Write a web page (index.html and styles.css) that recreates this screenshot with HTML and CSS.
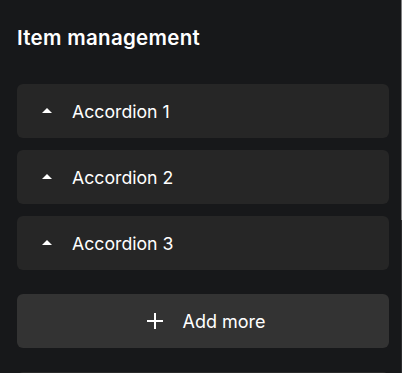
FILE: index.html
```html
<!DOCTYPE html>
<html lang="en">
<head>
<meta charset="UTF-8" />
<meta name="viewport" content="width=device-width, initial-scale=1" />
<title>Item management</title>
<link rel="stylesheet" href="styles.css">
</head>
<body>
  <div class="panel">
    <h2 class="panel-title">Item management</h2>

    <div class="accordion-list">
      <div class="accordion">
        <svg class="accordion-icon" viewBox="0 0 24 24" width="24" height="24"><path d="M7 14l5-5 5 5z" fill="currentColor"/></svg>
        <span>Accordion 1</span>
      </div>
      <div class="accordion">
        <svg class="accordion-icon" viewBox="0 0 24 24" width="24" height="24"><path d="M7 14l5-5 5 5z" fill="currentColor"/></svg>
        <span>Accordion 2</span>
      </div>
      <div class="accordion">
        <svg class="accordion-icon" viewBox="0 0 24 24" width="24" height="24"><path d="M7 14l5-5 5 5z" fill="currentColor"/></svg>
        <span>Accordion 3</span>
      </div>
    </div>

    <button class="add-more">
      <svg viewBox="0 0 18 18" width="18" height="18"><path d="M9 1v16M1 9h16" stroke="currentColor" stroke-width="2" fill="none"/></svg>
      <span>Add more</span>
    </button>

    <div class="next-section"></div>
  </div>
</body>
</html>
```

FILE: styles.css
```css
* {
  box-sizing: border-box;
}
body {
  margin: 0;
  background: #17181a;
  color: #fff;
  font-family: Inter, 'Noto Sans', sans-serif;
}
.panel {
  position: relative;
  height: 373px;
  overflow: hidden;
  padding: 25px 13px 0 17px;
}
/* thin scroll indicator on the right edge */
.panel::after {
  content: '';
  position: absolute;
  top: 0;
  right: 0;
  width: 1px;
  height: 100%;
  background: linear-gradient(#808082 0, #808082 220px, #2c2d2f 220px);
}
.panel-title {
  margin: 0 0 33px;
  font-size: 20.5px;
  line-height: 26px;
  font-weight: 600;
  letter-spacing: 0.3px;
}
.accordion-list {
  display: flex;
  flex-direction: column;
  gap: 12px;
}
.accordion {
  display: flex;
  align-items: center;
  gap: 13px;
  height: 54px;
  padding: 0 18px;
  background: #262626;
  border-radius: 6px;
  font-size: 17.7px;
}
.accordion-icon {
  color: #fff;
  flex: none;
}
.add-more {
  display: flex;
  align-items: center;
  justify-content: center;
  gap: 18px;
  width: 100%;
  height: 54px;
  margin-top: 24px;
  padding: 0 0 0 6px;
  border: none;
  border-radius: 6px;
  background: #333333;
  color: #fff;
  font-family: inherit;
  font-size: 18px;
}
.next-section {
  height: 260px;
  margin-top: 24px;
  background: #2a2a2a;
  border-radius: 6px;
}
```
